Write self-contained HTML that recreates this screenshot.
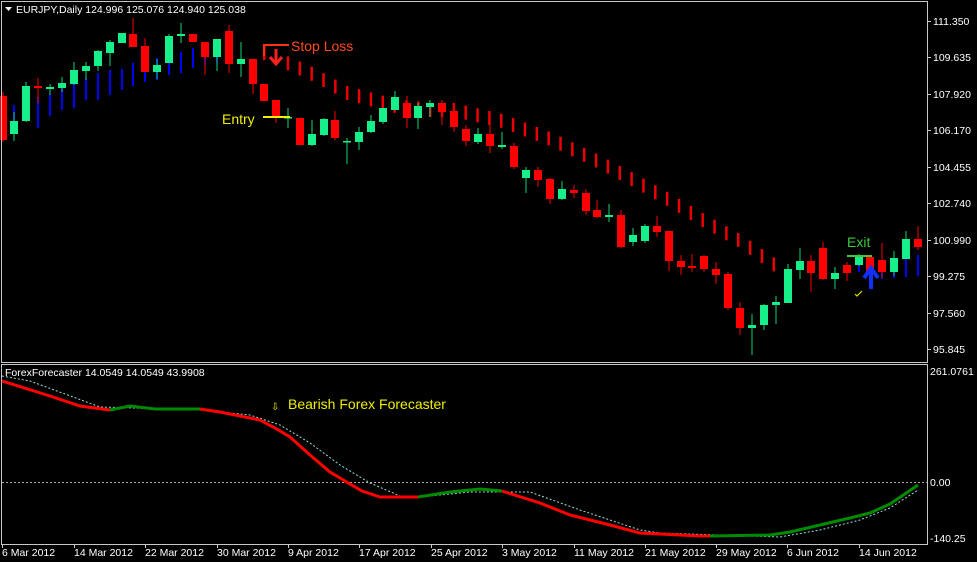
<!DOCTYPE html>
<html><head><meta charset="utf-8"><style>
html,body{margin:0;padding:0;background:#000;width:977px;height:562px;overflow:hidden}
svg{display:block}
text{font-family:"Liberation Sans",sans-serif;font-size:10.5px;fill:#fff}
.big{font-family:"Liberation Sans",sans-serif;font-size:14px}
</style></head><body>
<svg id="s" width="977" height="562" viewBox="0 0 977 562" xmlns="http://www.w3.org/2000/svg">
<rect width="977" height="562" fill="#000"/>
<g id="g"></g>
<path d="M1.5 1.5H927.5V362.5H1.5Z M1.5 364.5H927.5V544.5H1.5Z" fill="none" stroke="#c8c8c8" stroke-width="1"/>
<line x1="2" y1="482.5" x2="927" y2="482.5" stroke="#aaa" stroke-dasharray="2,2"/>
<polyline fill="none" stroke="#9dd" stroke-width="1" stroke-dasharray="2,2" points="2,376 30,381 100,407 200,410 250,415 280,425 310,443 340,465 370,483 400,496 420,497 470,492 530,492 580,510 640,530 660,533 780,537 820,530 860,520 890,508 918,490"/>
<polyline fill="none" stroke="#ff0000" stroke-width="3" points="2,381 50,396 80,406 110,410"/>
<polyline fill="none" stroke="#008a00" stroke-width="3" points="110,410 130,406 155,409 200,409"/>
<polyline fill="none" stroke="#ff0000" stroke-width="3" points="200,409 220,412 260,420 275,428 290,437 310,455 330,472 350,484 362,491 380,497 418,497"/>
<polyline fill="none" stroke="#008a00" stroke-width="3" points="418,497 450,492 480,489 502,491"/>
<polyline fill="none" stroke="#ff0000" stroke-width="3" points="502,491 540,503 570,515 610,525 640,533 700,536 710,536"/>
<polyline fill="none" stroke="#008a00" stroke-width="3" points="710,536 770,535 790,532 820,525 850,518 870,513 890,504 918,485"/>
<text x="5" y="376">ForexForecaster 14.0549 14.0549 43.9908</text>
<text x="271" y="410" style="fill:#e8e800;font-size:10px">⇩</text>
<text class="big" x="288" y="409" style="fill:#f0f000">Bearish Forex Forecaster</text>
<path d="M5 7h7l-3.5 4z" fill="#fff"/>
<text x="16" y="13">EURJPY,Daily  124.996 125.076 124.940 125.038</text>
<g id="ax"></g>
<text x="930" y="375">261.0761</text>
<text x="930" y="486">0.00</text>
<text x="930" y="542">-140.25</text>
<g id="dt"></g>
<text class="big" x="291" y="51" style="fill:#ff4a1a">Stop Loss</text>
<path d="M264 56V45H289" fill="none" stroke="#ff3010" stroke-width="2"/>
<path d="M276 49v13M270 57l6 7 6-7" fill="none" stroke="#ff2020" stroke-width="3"/>
<text class="big" x="222" y="124" style="fill:#f0f000">Entry</text>
<line x1="263" y1="117" x2="290" y2="117" stroke="#f0f000" stroke-width="2"/>
<text class="big" x="847" y="247" style="fill:#3cc83c">Exit</text>
<line x1="847" y1="256" x2="872" y2="256" stroke="#3cc83c" stroke-width="2"/>
<path d="M871 289V268M864 278l7-10 7 10" fill="none" stroke="#1030ff" stroke-width="4"/>
<path d="M855 294l2 2 5-5" fill="none" stroke="#e0e000" stroke-width="1.2"/>
</svg>
<script>
var NS="http://www.w3.org/2000/svg",g=document.getElementById('g');
function el(t,a){var e=document.createElementNS(NS,t);for(var k in a)e.setAttribute(k,a[k]);g.appendChild(e);return e;}
var bl=[[3,98,135],[14,105,128],[26,97,120],[38,97,128],[50,94,116],[62,88,110],[74,80,108],[86,78,100],[98,73,100],[110,70,95],[122,69,90],[133,63,86],[145,60,82],[157,58,80],[169,56,75],[181,52,73],[193,48,68],[205,42,65],[217,45,63],[229,42,63],
[859,265,272],[870,265,281],[882,263,279],[894,261,278],[906,255,277],[918,255,276]];
bl.forEach(function(b){el('line',{x1:b[0],x2:b[0],y1:b[1],y2:b[2],stroke:'#0000ff','stroke-width':2});});
var pts=[[241,42],[253,44],[264,46],[312,67],[347,86],[395,99],[430,103],[454,103],[502,114],[550,132],[597,154],[633,173],[669,193],[704,214],[740,234],[776,259]];
function iy(x){for(var i=1;i<pts.length;i++){if(x<=pts[i][0]){var a=pts[i-1],b=pts[i];return a[1]+(b[1]-a[1])*(x-a[0])/(b[0]-a[0]);}}return pts[pts.length-1][1];}
for(var x=264;x<=777;x+=11.85){var y=iy(x);el('rect',{x:x-1,y:y,width:2.5,height:14,fill:'#ee0000'});}
var c=[[3,96,140,92,142,'r'],[14,121,134,112,141,'g'],[26,86,121,82,122,'g'],[38,86,88,78,103,'r'],[50,87,89,84,95,'g'],[62,83,88,77,92,'g'],[74,70,84,62,85,'g'],[86,66,71,62,80,'g'],[98,51,66,50,71,'g'],[110,42,53,40,66,'g'],[122,33,43,33,43,'g'],[133,34,47,18,47,'r'],[145,46,72,38,72,'r'],[157,65,72,59,79,'g'],[169,36,63,34,63,'g'],[181,34,36,23,43,'g'],[193,34,42,34,42,'r'],[205,42,57,42,75,'r'],[217,39,57,39,71,'g'],[229,31,64,25,73,'r'],[241,59,64,42,77,'g'],[253,59,84,59,94,'r'],[264,84,101,84,101,'r'],[276,100,116,100,123,'r'],[288,117,118,108,128,'g'],[300,118,145,118,145,'r'],
[312,134,145,120,146,'g'],[324,119,135,118,136,'g'],[335,120,138,111,140,'r'],[347,141,142,138,164,'g'],[359,132,142,127,150,'g'],[371,121,132,115,133,'g'],[383,108,122,108,124,'g'],[395,97,110,91,110,'g'],[407,103,118,96,128,'r'],[418,106,118,103,129,'g'],[430,103,107,100,117,'g'],[442,103,112,100,125,'r'],[454,111,127,103,132,'r'],[466,129,141,125,146,'r'],[478,134,142,128,144,'g'],[490,134,146,123,153,'r'],[502,145,147,132,149,'g'],[514,146,167,143,169,'r'],[526,170,178,167,193,'g'],[538,170,180,167,187,'r'],[550,179,199,178,204,'r'],[562,189,199,181,200,'g'],[574,190,193,185,198,'r'],[586,193,211,189,215,'r'],[597,210,217,200,218,'r'],[609,215,217,204,222,'g'],[621,215,247,210,248,'r'],[633,235,242,228,246,'g'],[645,226,241,224,243,'g'],[657,226,232,216,237,'r'],[669,231,261,231,271,'r'],[681,261,267,255,275,'r'],[692,266,268,254,272,'r'],[704,256,269,255,272,'r'],[716,269,275,262,284,'r'],[728,274,308,272,310,'r'],[740,308,328,302,335,'r'],[752,325,328,314,355,'g'],[764,305,325,304,330,'g'],[776,302,305,296,324,'g'],[788,269,303,264,303,'g'],[800,261,270,248,279,'g'],[811,261,273,255,292,'r'],[823,248,279,242,280,'r'],[835,273,279,267,289,'g'],[847,265,273,262,281,'r'],[859,256,265,254,266,'g'],[870,257,274,256,280,'r'],[882,260,272,243,278,'r'],[894,258,272,251,276,'g'],[906,239,259,231,259,'g'],[918,239,247,226,250,'r']];
c.forEach(function(k){var col=k[5]=='g'?'#17ef8a':'#ff0000',wc=k[5]=='g'?'#0fb060':'#d00000';
el('line',{x1:k[0],x2:k[0],y1:k[3],y2:k[4],stroke:wc,'stroke-width':1.2});
var h=Math.max(k[2]-k[1],1.5);el('rect',{x:k[0]-4,y:k[1],width:8,height:h,fill:col});});
var ax=document.getElementById('ax');
[["111.350",21],["109.635",57],["107.920",94],["106.170",130],["104.455",167],["102.740",203],["100.990",240],["99.275",276],["97.560",313],["95.845",349]].forEach(function(a){
var t=document.createElementNS(NS,'text');t.setAttribute('x',933);t.setAttribute('y',a[1]+4);t.textContent=a[0];ax.appendChild(t);
var l=document.createElementNS(NS,'line');l.setAttribute('x1',928);l.setAttribute('x2',931);l.setAttribute('y1',a[1]+.5);l.setAttribute('y2',a[1]+.5);l.setAttribute('stroke','#ccc');ax.appendChild(l);});
var dt=document.getElementById('dt');
[["6 Mar 2012",2],["14 Mar 2012",74],["22 Mar 2012",145],["30 Mar 2012",217],["9 Apr 2012",288],["17 Apr 2012",359],["25 Apr 2012",431],["3 May 2012",502],["11 May 2012",574],["21 May 2012",645],["29 May 2012",716],["6 Jun 2012",787],["14 Jun 2012",859]].forEach(function(a){
var t=document.createElementNS(NS,'text');t.setAttribute('x',a[1]);t.setAttribute('y',556);t.textContent=a[0];dt.appendChild(t);
var l=document.createElementNS(NS,'line');l.setAttribute('x1',a[1]+.5);l.setAttribute('x2',a[1]+.5);l.setAttribute('y1',545);l.setAttribute('y2',548);l.setAttribute('stroke','#ccc');dt.appendChild(l);});
</script>
</body></html>
